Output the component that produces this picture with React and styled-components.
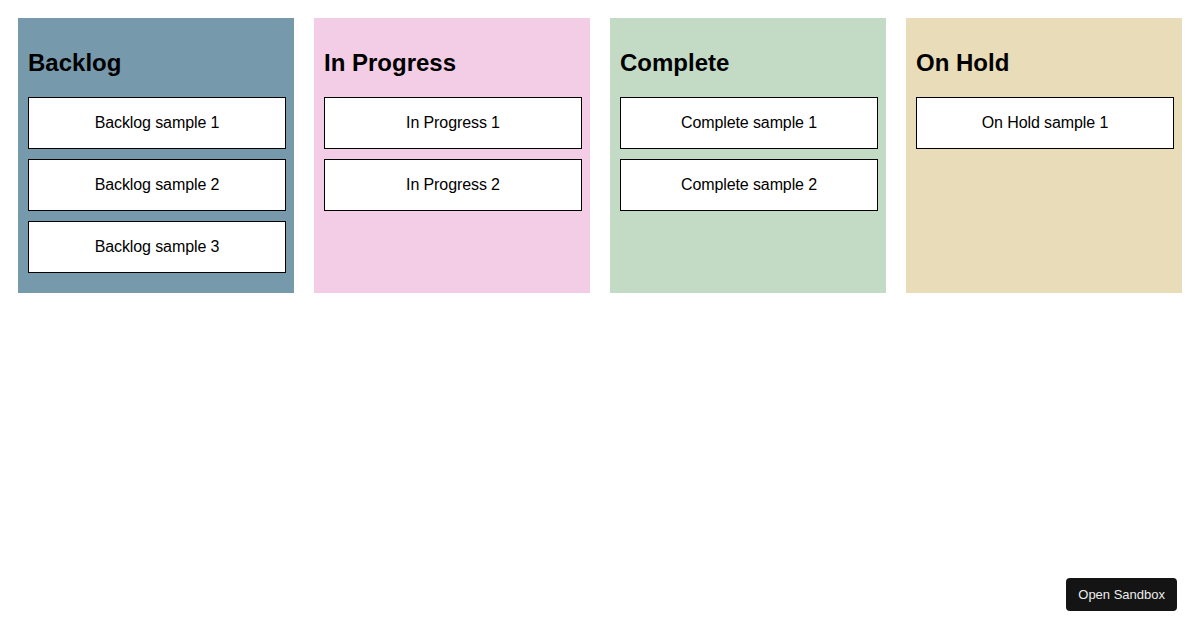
import styled, { createGlobalStyle } from "styled-components";

const GlobalStyle = createGlobalStyle`
  body {
    margin: 0;
    background: #ffffff;
    font-family: "Liberation Sans", Arial, sans-serif;
    color: #000000;
  }
`;

const columns = [
  {
    title: "Backlog",
    color: "#7799ac",
    items: ["Backlog sample 1", "Backlog sample 2", "Backlog sample 3"],
  },
  {
    title: "In Progress",
    color: "#f2cde5",
    items: ["In Progress 1", "In Progress 2"],
  },
  {
    title: "Complete",
    color: "#c3dac5",
    items: ["Complete sample 1", "Complete sample 2"],
  },
  {
    title: "On Hold",
    color: "#e8dcb9",
    items: ["On Hold sample 1"],
  },
];

const StyledBoard = styled.main`
  display: flex;
  gap: 20px;
  padding: 18px 18px 0 18px;
`;

const StyledColumn = styled.section`
  flex: 1;
  background-color: ${({ $color }) => $color};
  padding: 10px 8px 20px 10px;
  display: flex;
  flex-direction: column;
`;

const StyledH2 = styled.h2`
  font-size: 24px;
  font-weight: bold;
  margin: 21px 0 20px;
`;

const StyledList = styled.div`
  display: flex;
  flex-direction: column;
  gap: 10px;
`;

const StyledCard = styled.div`
  background: #ffffff;
  border: 1px solid #000000;
  padding: 16px;
  font-size: 16px;
  line-height: 18px;
  letter-spacing: -0.1px;
  text-align: center;
`;

const StyledButton = styled.button`
  position: fixed;
  right: 23px;
  bottom: 19px;
  background: #141414;
  color: #ededed;
  border: none;
  border-radius: 4px;
  font-family: "Liberation Sans", Arial, sans-serif;
  font-size: 13px;
  padding: 0 12px;
  height: 33px;
  cursor: pointer;
`;

export default function App() {
  return (
    <>
      <GlobalStyle />
      <StyledBoard>
        {columns.map((column) => (
          <StyledColumn key={column.title} $color={column.color}>
            <StyledH2>{column.title}</StyledH2>
            <StyledList>
              {column.items.map((item) => (
                <StyledCard key={item}>{item}</StyledCard>
              ))}
            </StyledList>
          </StyledColumn>
        ))}
      </StyledBoard>
      <StyledButton>Open Sandbox</StyledButton>
    </>
  );
}
